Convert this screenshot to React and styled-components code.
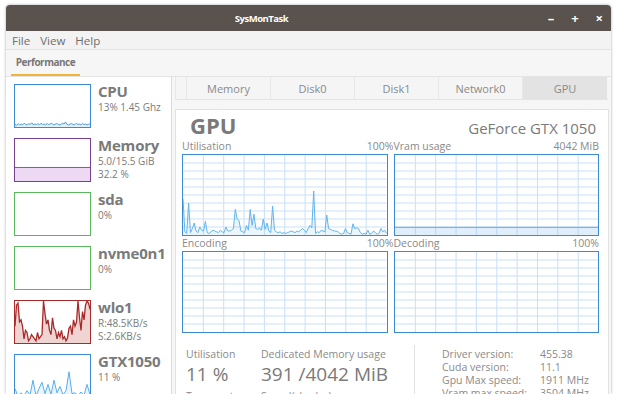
import React from 'react';
import styled, { createGlobalStyle } from 'styled-components';

const Global = createGlobalStyle`
  html, body { margin: 0; padding: 0; background: #fff; }
  body { font-family: "Open Sans", "Noto Sans", sans-serif; }
  * { box-sizing: border-box; }
`;

const Window = styled.div`
  margin: 5px 7px 0 6px;
  height: 389px;
  overflow: hidden;
  display: flex;
  flex-direction: column;
  background: #f6f6f6;
  border-radius: 4px 4px 0 0;
  box-shadow: 0 0 3px rgba(0, 0, 0, 0.35);
`;

const TitleBar = styled.div`
  height: 26px;
  flex: none;
  background: #5a524c;
  display: flex;
  align-items: center;
  justify-content: center;
  padding-right: 94px;
  position: relative;
  color: #fff;
  font-size: 9.5px;
  font-weight: 700;
  letter-spacing: -0.5px;
`;

const Controls = styled.div`
  position: absolute;
  right: 8px;
  top: 0;
  height: 26px;
  display: flex;
  align-items: center;
  gap: 17px;
  font-weight: 700;
  font-size: 13px;
  letter-spacing: 0;
`;

const MenuBar = styled.div`
  height: 19px;
  flex: none;
  background: #f3f3f3;
  border-bottom: 1px solid #e2e2e2;
  display: flex;
  align-items: center;
  gap: 10px;
  padding-left: 6px;
  font-size: 11.5px;
  color: #6e6e6e;
`;

const TabBar = styled.div`
  height: 27px;
  flex: none;
  background: #f6f6f6;
  border-bottom: 1px solid #e4e4e4;
  display: flex;
  padding-left: 5px;
`;

const MainTab = styled.div`
  width: 69px;
  display: flex;
  align-items: center;
  justify-content: center;
  font-size: 10px;
  font-weight: 700;
  letter-spacing: -0.5px;
  color: #777;
  border-bottom: 2px solid #f0b43c;
`;

const Body = styled.div`
  flex: 1;
  display: flex;
  min-height: 0;
`;

const Sidebar = styled.div`
  width: 166px;
  flex: none;
  background: #fff;
  border-right: 1px solid #dcdcdc;
  padding: 7px 0 0 8px;
  display: flex;
  flex-direction: column;
  gap: 10px;
`;

const SideItem = styled.div`
  display: flex;
  gap: 7px;
  height: 44px;
  flex: none;
`;

const SideGraph = styled.div`
  width: 77px;
  height: 44px;
  flex: none;
  border: 1.5px solid ${(p) => p.$color};
  background: #fff;
  overflow: hidden;
`;

const SideInfo = styled.div`
  display: flex;
  flex-direction: column;
  color: #7a7a7a;
  min-width: 0;
`;

const SideName = styled.div`
  font-size: 15px;
  font-weight: 700;
  line-height: 18px;
  margin-top: -2px;
  margin-bottom: 1px;
  letter-spacing: -0.2px;
`;

const SideSub = styled.div`
  font-size: 10px;
  line-height: 13px;
`;

const Right = styled.div`
  flex: 1;
  display: flex;
  flex-direction: column;
  padding: 0 2px 0 3px;
  min-width: 0;
`;

const SubTabs = styled.div`
  height: 23px;
  flex: none;
  display: flex;
  border-bottom: 1px solid #e4e4e4;
  margin-right: 1px;
`;

const SubTab = styled.div`
  width: ${(p) => p.$w || 84}px;
  flex: none;
  display: flex;
  align-items: center;
  justify-content: center;
  font-size: 11px;
  color: #8a8a8a;
  background: ${(p) => (p.$active ? '#e3e3e3' : '#f5f5f5')};
  border-left: 1px solid #e8e8e8;
`;

const Panel = styled.div`
  margin-top: 9px;
  flex: 1;
  background: #fff;
  border: 1px solid #e2e2e2;
  border-bottom: none;
  padding: 0 9px 0 6px;
  display: flex;
  flex-direction: column;
`;

const PanelHead = styled.div`
  display: flex;
  justify-content: space-between;
  align-items: baseline;
  padding: 1px 3px 0 8px;
  color: #777;
  height: 29px;
`;

const Big = styled.div`
  font-size: 22px;
  font-weight: 700;
  line-height: 28px;
  color: #7a7a7a;
`;

const Model = styled.div`
  font-size: 15px;
  color: #7a7a7a;
`;

const Grid = styled.div`
  display: grid;
  grid-template-columns: 1fr 1fr;
  column-gap: 6px;
`;

const ChartBlock = styled.div`
  display: flex;
  flex-direction: column;
`;

const ChartLabel = styled.div`
  display: flex;
  justify-content: space-between;
  font-size: 10.5px;
  color: #8a8a8a;
  line-height: 14px;
  height: 15px;
  margin-right: ${(p) => (p.$tight ? '-6px' : '0')};
`;

const ChartBox = styled.div`
  height: 82px;
  border: 1.5px solid #3d8ad4;
  background: #fff;
`;

const Stats = styled.div`
  display: flex;
  margin-top: 12px;
  flex: 1;
`;

const StatCol = styled.div`
  display: flex;
  flex-direction: column;
  padding-left: ${(p) => p.$pl || 0}px;
  width: ${(p) => p.$w}px;
  flex: none;
`;

const StatLabel = styled.div`
  font-size: 10.5px;
  color: #8a8a8a;
  line-height: 13px;
  margin-top: 3px;
`;

const StatValue = styled.div`
  font-size: 19px;
  color: #7a7a7a;
  line-height: 26px;
`;

const Divider = styled.div`
  width: 1px;
  background: #e2e2e2;
  flex: none;
`;

const Info = styled.div`
  display: grid;
  grid-template-columns: 98px auto;
  padding: 3px 0 0 27px;
  font-size: 10.5px;
  line-height: 13px;
  color: #8a8a8a;
  align-content: start;
`;

const util = [
  45, 4, 2, 40, 3, 8, 15, 5, 3, 10, 6, 5, 17, 3, 2, 4, 6, 5, 4, 3, 6, 4, 3, 10, 5, 5, 6, 8, 32, 20, 18, 5,
  4, 3, 12, 6, 32, 12, 26, 8, 7, 9, 6, 20, 7, 15, 5, 3, 36, 6, 4, 3, 4, 2, 3, 2, 3, 4, 5, 4, 3, 5, 4, 6,
  8, 6, 3, 8, 12, 9, 55, 2, 4, 3, 6, 5, 4, 25, 8, 7, 6, 5, 5, 4, 2, 1, 2, 8, 3, 2, 1, 14, 8, 9, 8, 3, 1, 2,
  1, 6, 1, 2, 5, 3, 1, 2, 8, 4, 6, 2,
];

const cpu = [
  6, 4, 8, 5, 7, 5, 9, 6, 5, 8, 6, 10, 5, 7, 6, 8, 5, 9, 6, 7, 5, 8, 6, 7, 9, 5, 6, 8, 7, 5, 6, 9, 7, 12, 6,
  5, 7, 8, 6, 5, 9, 6, 7, 5, 8, 6, 7, 5, 6, 8,
];

const wlo = [
  40, 90, 95, 50, 55, 40, 10, 30, 25, 5, 10, 20, 15, 10, 5, 25, 10, 15, 20, 100, 70, 45, 55, 30, 20, 60, 35,
  30, 10, 25, 15, 30, 10, 15, 5, 12, 35, 40, 20, 55, 40, 50, 100, 60, 30, 75, 55, 90, 100, 95, 80,
];

const gtx = [
  20, 2, 10, 3, 15, 5, 40, 3, 20, 35, 8, 30, 6, 40, 10, 25, 5, 15, 60, 8, 10, 3, 12, 4, 30, 6,
];

function GridLines({ cols = 10, rows = 10 }) {
  const lines = [];
  for (let i = 1; i < cols; i++) {
    const x = (i * 100) / cols;
    lines.push(<line key={'c' + i} x1={x} y1="0" x2={x} y2="100" vectorEffect="non-scaling-stroke" />);
  }
  for (let i = 1; i < rows; i++) {
    const y = (i * 100) / rows;
    lines.push(<line key={'r' + i} x1="0" y1={y} x2="100" y2={y} vectorEffect="non-scaling-stroke" />);
  }
  return (
    <g stroke="#c9e0f5" strokeWidth="1">
      {lines}
    </g>
  );
}

function Series({ data, stroke, fill, width = 1 }) {
  const step = 100 / (data.length - 1);
  const pts = data.map((v, i) => `${(i * step).toFixed(2)},${(100 - v).toFixed(2)}`).join(' ');
  return (
    <>
      <polygon points={`0,100 ${pts} 100,100`} fill={fill} stroke="none" />
      <polyline points={pts} fill="none" stroke={stroke} strokeWidth={width} vectorEffect="non-scaling-stroke" />
    </>
  );
}

function Chart({ children, grid }) {
  return (
    <svg width="100%" height="100%" viewBox="0 0 100 100" preserveAspectRatio="none" style={{ display: 'block' }}>
      {grid && <GridLines />}
      {children}
    </svg>
  );
}

const side = [
  {
    name: 'CPU',
    sub: ['13% 1.45 Ghz'],
    color: '#3d8ad4',
    chart: <Series data={cpu} stroke="#4a9be0" fill="rgba(120,180,235,0.2)" />,
  },
  {
    name: 'Memory',
    sub: ['5.0/15.5 GiB', '32.2 %'],
    color: '#7a3f8e',
    chart: <Series data={[32.2, 32.2]} stroke="#8c55a0" fill="#eed9f4" />,
  },
  { name: 'sda', sub: ['0%'], color: '#5cb85c' },
  { name: 'nvme0n1', sub: ['0%'], color: '#5cb85c' },
  {
    name: 'wlo1',
    sub: ['R:48.5KB/s', 'S:2.6KB/s'],
    color: '#a82a2a',
    chart: <Series data={wlo} stroke="#a82a2a" fill="#efd4d2" width={1.3} />,
  },
  {
    name: 'GTX1050',
    sub: ['11 %'],
    color: '#3d8ad4',
    chart: <Series data={gtx} stroke="#5aaeea" fill="rgba(120,180,235,0.15)" />,
  },
];

export default function App() {
  return (
    <>
      <Global />
      <Window>
        <TitleBar>
          SysMonTask
          <Controls>
            <span>–</span>
            <span>+</span>
            <span>×</span>
          </Controls>
        </TitleBar>
        <MenuBar>
          <span>File</span>
          <span>View</span>
          <span>Help</span>
        </MenuBar>
        <TabBar>
          <MainTab>Performance</MainTab>
        </TabBar>
        <Body>
          <Sidebar>
            {side.map((s) => (
              <SideItem key={s.name}>
                <SideGraph $color={s.color}>
                  <Chart>{s.chart}</Chart>
                </SideGraph>
                <SideInfo>
                  <SideName>{s.name}</SideName>
                  {s.sub.map((t) => (
                    <SideSub key={t}>{t}</SideSub>
                  ))}
                </SideInfo>
              </SideItem>
            ))}
          </Sidebar>
          <Right>
            <SubTabs>
              <SubTab $w={11} />
              <SubTab>Memory</SubTab>
              <SubTab>Disk0</SubTab>
              <SubTab>Disk1</SubTab>
              <SubTab>Network0</SubTab>
              <SubTab $active $w={85}>GPU</SubTab>
            </SubTabs>
            <Panel>
              <PanelHead>
                <Big>GPU</Big>
                <Model>GeForce GTX 1050</Model>
              </PanelHead>
              <Grid>
                <ChartBlock>
                  <ChartLabel $tight>
                    <span>Utilisation</span>
                    <span>100%</span>
                  </ChartLabel>
                  <ChartBox>
                    <Chart grid>
                      <Series data={util} stroke="#62b4ec" fill="rgba(140,200,240,0.18)" />
                    </Chart>
                  </ChartBox>
                </ChartBlock>
                <ChartBlock>
                  <ChartLabel>
                    <span>Vram usage</span>
                    <span>4042 MiB</span>
                  </ChartLabel>
                  <ChartBox>
                    <Chart grid>
                      <Series data={[9.6, 9.6]} stroke="#62a8e6" fill="rgba(150,200,240,0.3)" />
                    </Chart>
                  </ChartBox>
                </ChartBlock>
                <ChartBlock>
                  <ChartLabel $tight>
                    <span>Encoding</span>
                    <span>100%</span>
                  </ChartLabel>
                  <ChartBox>
                    <Chart grid />
                  </ChartBox>
                </ChartBlock>
                <ChartBlock>
                  <ChartLabel>
                    <span>Decoding</span>
                    <span>100%</span>
                  </ChartLabel>
                  <ChartBox>
                    <Chart grid />
                  </ChartBox>
                </ChartBlock>
              </Grid>
              <Stats>
                <StatCol $w={79} $pl={4}>
                  <StatLabel>Utilisation</StatLabel>
                  <StatValue>11 %</StatValue>
                  <StatLabel>Temperature</StatLabel>
                </StatCol>
                <StatCol $w={153}>
                  <StatLabel>Dedicated Memory usage</StatLabel>
                  <StatValue>391 /4042 MiB</StatValue>
                  <StatLabel>Speed(shader)</StatLabel>
                </StatCol>
                <Divider />
                <Info>
                  <span>Driver version:</span>
                  <span>455.38</span>
                  <span>Cuda version:</span>
                  <span>11.1</span>
                  <span>Gpu Max speed:</span>
                  <span>1911 MHz</span>
                  <span>Vram max speed:</span>
                  <span>3504 MHz</span>
                </Info>
              </Stats>
            </Panel>
          </Right>
        </Body>
      </Window>
    </>
  );
}
